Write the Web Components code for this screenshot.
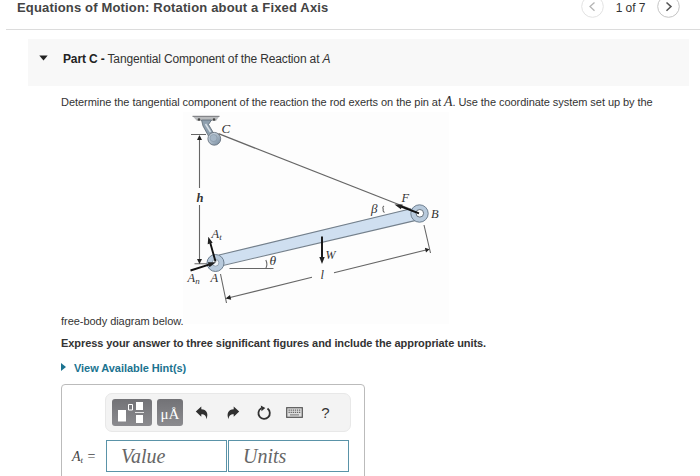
<!DOCTYPE html>
<html lang="en">
<head>
<meta charset="utf-8">
<title>Equations of Motion: Rotation about a Fixed Axis</title>
<style>
    html, body {
        margin: 0;
        height: 476px;
        overflow: hidden;
        background: #fff;
        font-family: "Liberation Sans", Arial, sans-serif;
        color: #333;
    }
</style>
</head>
<body>
<problem-page>
    <item-header slot="header" position="1 of 7">Equations of Motion: Rotation about a Fixed Axis</item-header>
    <part-heading label="Part C -">Tangential Component of the Reaction at <i>A</i></part-heading>
    <part-question>
        <rod-diagram slot="figure"></rod-diagram>
    </part-question>
    <answer-box></answer-box>
</problem-page>

<script>
class ProblemPage extends HTMLElement {
    constructor() {
        super();
        this.attachShadow({ mode: 'open' }).innerHTML = `
            <style>
                :host {
                    display: block;
                    height: 476px;
                    overflow: hidden;
                }

                main {
                    display: flex;
                    flex-direction: column;
                    padding: 9px 11px 0 28px;
                }
            </style>
            <slot name="header"></slot>
            <main><slot></slot></main>
        `;
    }
}

class ItemHeader extends HTMLElement {
    constructor() {
        super();
        this.attachShadow({ mode: 'open' }).innerHTML = `
            <style>
                :host {
                    display: flex;
                    align-items: flex-start;
                    justify-content: space-between;
                    box-sizing: border-box;
                    height: 30px;
                    margin-left: 6px;
                    padding: 0 20px 0 11px;
                    border-bottom: 1px solid #dcdcdc;
                }

                h1 {
                    margin: 0;
                    font-size: 13px;
                    line-height: 15px;
                    letter-spacing: 0.165px;
                    color: #444;
                }

                nav {
                    display: flex;
                    align-items: center;
                    margin-top: -5px;
                    font-size: 12px;
                }

                .count {
                    width: 53px;
                    text-align: center;
                    padding-top: 2px;
                    letter-spacing: -0.1px;
                }

                svg {
                    display: block;
                    width: 23px;
                    height: 23px;
                    fill: none;
                }
            </style>
            <h1><slot></slot></h1>
            <nav>
                <svg viewBox="0 0 23 23">
                    <circle cx="11.5" cy="11.5" r="10.8" stroke="#e2e2e2"/>
                    <path d="M13.5 7.5L9 11.6L13.5 15.8" stroke="#b5b5b5" stroke-width="1.3"/>
                </svg>
                <span class="count"></span>
                <svg viewBox="0 0 23 23">
                    <circle cx="11.5" cy="11.5" r="10.8" stroke="#c4c4c4"/>
                    <path d="M9.5 7.5L14 11.6L9.5 15.8" stroke="#555" stroke-width="1.5"/>
                </svg>
            </nav>
        `;
    }

    connectedCallback() {
        this.shadowRoot.querySelector('.count').textContent = this.getAttribute('position');
    }
}

class PartHeading extends HTMLElement {
    constructor() {
        super();
        this.attachShadow({ mode: 'open' }).innerHTML = `
            <style>
                :host {
                    display: flex;
                    align-items: center;
                    box-sizing: border-box;
                    height: 47px;
                    padding: 0 0 8px 11px;
                    background: #f8f8f8;
                    font-size: 12px;
                    letter-spacing: -0.145px;
                }

                svg {
                    width: 9px;
                    height: 6px;
                    margin: -2px 15px 0 0;
                    fill: #222;
                }

                b {
                    color: #222;
                }
            </style>
            <svg viewBox="0 0 9 6"><path d="M0.3 0.6H8.7L4.5 5.6Z"/></svg>
            <span><b></b> <slot></slot></span>
        `;
    }

    connectedCallback() {
        this.shadowRoot.querySelector('b').textContent = this.getAttribute('label');
    }
}

class PartQuestion extends HTMLElement {
    constructor() {
        super();
        this.attachShadow({ mode: 'open' }).innerHTML = `
            <style>
                :host {
                    display: block;
                    padding: 7px 0 0 33px;
                    font-size: 11px;
                }

                p {
                    margin: 0;
                    white-space: nowrap;
                }

                .intro {
                    height: 19px;
                    line-height: 19px;
                    letter-spacing: -0.052px;
                }

                .intro i {
                    font: italic 14px/1 "Liberation Serif", serif;
                }

                .figure {
                    display: flex;
                    align-items: flex-end;
                }

                .figure span {
                    width: 122px;
                    line-height: 13px;
                    margin-bottom: -4px;
                    white-space: nowrap;
                    letter-spacing: -0.04px;
                }

                .express {
                    margin-top: 13px;
                    line-height: 13px;
                    font-weight: bold;
                    letter-spacing: -0.078px;
                }

                .hints {
                    display: flex;
                    align-items: center;
                    gap: 8px;
                    margin-top: 12px;
                    line-height: 13px;
                    font-weight: bold;
                    letter-spacing: -0.05px;
                    color: #1b7390;
                }

                .hints svg {
                    width: 5px;
                    height: 8px;
                    margin-top: -3px;
                    fill: currentColor;
                }
            </style>
            <p class="intro">Determine the tangential component of the reaction the rod exerts on the pin at <i>A</i>. Use the coordinate system set up by the</p>
            <div class="figure"><span>free-body diagram below.</span><slot name="figure"></slot></div>
            <p class="express">Express your answer to three significant figures and include the appropriate units.</p>
            <div class="hints">
                <svg viewBox="0 0 5 8"><path d="M0 0L5 4L0 8Z"/></svg>
                <span>View Available Hint(s)</span>
            </div>
        `;
    }
}

class RodDiagram extends HTMLElement {
    constructor() {
        super();
        this.attachShadow({ mode: 'open' }).innerHTML = `
            <style>
                :host {
                    display: block;
                    width: 266px;
                    height: 212px;
                    background: #fdfdfd;
                }

                svg {
                    display: block;
                    width: 266px;
                    height: 212px;
                }

                text {
                    font: italic 12.5px "Liberation Serif", serif;
                    fill: #333;
                }

                .thin {
                    fill: none;
                    stroke: #666;
                    stroke-width: 1.1;
                }

                .force {
                    stroke: #111;
                    stroke-width: 1.9;
                }

                .tip {
                    fill: #222;
                }
            </style>
            <svg viewBox="183 112 266 212">
                <defs>
                    <linearGradient id="steel" x1="0" y1="0" x2="1" y2="1">
                        <stop offset="0" stop-color="#dfe8f0"/>
                        <stop offset="1" stop-color="#72879b"/>
                    </linearGradient>
                </defs>

                <!-- ceiling bracket and pulley at C -->
                <path d="M192.5 116H219.5L216 121H197Z" fill="#b9bbbd"/>
                <path d="M192.5 116.3H219.5" stroke="#77797c"/>
                <path d="M201.5 120H211.5L208.500 124.500L213.500 133L208.500 136L203 126Z" fill="#8e9fae" stroke="#5c6873" stroke-width="0.8"/>
                <path d="M205.5 124L210.500 132" stroke="#d6dfe7" stroke-width="1.5"/>
                <circle cx="199" cy="119.5" r="1.3" fill="#444"/>
                <circle cx="214" cy="119.5" r="1.3" fill="#444"/>
                <circle cx="214.3" cy="138.8" r="6.4" fill="url(#steel)" stroke="#66727e" stroke-width="0.9"/>
                <circle cx="213.5" cy="138" r="3.6" fill="#a5b6c6" stroke="#7b8b9a" stroke-width="0.5"/>
                <path d="M218.5 133.7L414 210.5" stroke="#666" stroke-width="1.3"/>

                <!-- height dimension -->
                <path class="thin" d="M191 134.5H206M199.5 136V188M199.5 205V263M194.5 263.7H207"/>
                <path class="tip" d="M199.5 135L202 140H197ZM199.5 264L197 259H202Z"/>

                <!-- rod -->
                <path d="M217 255.5L413.5 208L416 220.5L221 265.5Z" fill="#cfdff0"/>
                <path d="M219 255L411 208.8M223 265.5L415 220.6" fill="none" stroke="#74808c" stroke-width="1.1"/>
                <circle cx="215.5" cy="263" r="8.5" fill="#b8cadc" stroke="#6e7f90"/>
                <circle cx="215.5" cy="262.8" r="3.4" fill="#eff4f8" stroke="#8494a3" stroke-width="0.8"/>
                <circle cx="419.5" cy="213.5" r="8.7" fill="#b8cadc" stroke="#6e7f90"/>
                <circle cx="419.8" cy="213.3" r="3.8" fill="#fff" stroke="#65717d"/>

                <!-- forces -->
                <path class="force" d="M190.5 270.5L209 264.6M215.5 261.5L210.3 243M419 213.3L401 206.5M322 236.5V258"/>
                <path class="tip" d="M216 262.3L209.5 267.2L207.8 262.3ZM208.3 236.8L212.7 242.7L207.7 244.2ZM394.5 204.5L402.7 204.5L400.9 209.2ZM322 264L319.3 257H324.7Z"/>

                <!-- angle and length dimension -->
                <path class="thin" d="M229.5 268.5H273.5M265.8 260Q268 264.3 265.8 268.5M384 206Q382 207.500 383.300 209Q382.500 211.500 384.500 212.500"/>
                <path class="thin" d="M220.5 274L226.5 303M424 225L430.5 253M227 298.2L312 277.3M334 272.7L428 249.5"/>
                <path class="tip" d="M225.5 298.6L230 294.9L231.2 299.8ZM429.5 249.2L424.9 247.8L426 252.5Z"/>

                <text x="221.5" y="132.5" style="font-size: 13px">C</text>
                <text x="196.5" y="201.5" style="font-weight: bold">h</text>
                <text x="211.5" y="237.5">A<tspan dy="2" style="font-size: 9px">t</tspan></text>
                <text x="187.5" y="281.5">A<tspan dy="2.5" style="font-size: 9px">n</tspan></text>
                <text x="210.5" y="281.5">A</text>
                <text x="269.5" y="265" style="font-size: 13.5px">θ</text>
                <text x="371" y="213" style="font-size: 13px">β</text>
                <text x="401.5" y="201.5">F</text>
                <text x="431" y="217.5">B</text>
                <text x="325.5" y="258.5" style="font-size: 12px">W</text>
                <text x="320.5" y="278.5">l</text>
            </svg>
        `;
    }
}

class AnswerToolbar extends HTMLElement {
    constructor() {
        super();
        this.attachShadow({ mode: 'open' }).innerHTML = `
            <style>
                :host {
                    display: flex;
                    align-items: center;
                    box-sizing: border-box;
                    width: 246px;
                    height: 39px;
                    padding: 0 6px;
                    border: 1px solid #e8e8e8;
                    border-radius: 7px;
                    background: #f3f3f3;
                }

                button {
                    display: flex;
                    align-items: center;
                    justify-content: center;
                    width: 31px;
                    height: 27px;
                    padding: 0;
                    border: 0;
                    background: none;
                    font: 15px "Liberation Sans", sans-serif;
                    color: #333;
                }

                .dark {
                    box-sizing: border-box;
                    width: 26px;
                    margin-right: 3px;
                    border-radius: 3px;
                    background: linear-gradient(#727276, #8b8b8f);
                    font: 15px/25px "Liberation Serif", serif;
                    color: #fff;
                }

                .units {
                    padding-top: 3px;
                }

                .templates {
                    width: 40px;
                    margin-right: 5px;
                }

                svg {
                    display: block;
                    fill: none;
                }
            </style>
            <button class="dark templates" aria-label="Templates">
                <svg width="40" height="27" viewBox="0 0 40 27">
                    <path d="M6 11H14V22.5H6ZM24 3H31V11H24ZM24 16H31V24H24Z" fill="#fff"/>
                    <path d="M16.5 5.5H20.5V11H16.5Z" stroke="#fff"/>
                    <path d="M23 13.5H32" stroke="#e4e4e4"/>
                </svg>
            </button>
            <button class="dark units">μÅ</button>
            <button aria-label="Undo">
                <svg width="14" height="14" viewBox="0 0 14 14"><path d="M0.800 5.500L6.300 0.500V3.200C11.500 3.300 14 7.500 11.300 13.300C11.300 9.600 9.800 8.300 6.300 8.200V10.700Z" fill="#303030"/></svg>
            </button>
            <button aria-label="Redo">
                <svg width="14" height="14" viewBox="0 0 14 14"><path d="M13.200 5.500L7.700 0.500V3.200C2.500 3.300 0 7.500 2.700 13.300C2.700 9.600 4.200 8.300 7.700 8.200V10.700Z" fill="#303030"/></svg>
            </button>
            <button aria-label="Reset">
                <svg width="16" height="16" viewBox="0 0 16 16">
                    <path d="M11.500 3.600A5.700 5.700 0 1 1 5.200 3.300" stroke="#303030" stroke-width="1.8"/>
                    <path d="M4.800 0.500L9.300 3L5.500 6.200Z" fill="#303030"/>
                </svg>
            </button>
            <button aria-label="Keyboard shortcuts">
                <svg width="17" height="11" viewBox="0 0 17 11">
                    <rect x="0.7" y="0.7" width="15.6" height="9.6" fill="#ddd" stroke="#555" stroke-width="1.2"/>
                    <path d="M2.5 3.2H14.5M2.5 5.4H14.5" stroke="#666" stroke-width="1.2" stroke-dasharray="1.3 0.8"/>
                    <path d="M4 7.9H13" stroke="#777"/>
                </svg>
            </button>
            <button aria-label="Help">?</button>
        `;
    }
}

class AnswerBox extends HTMLElement {
    constructor() {
        super();
        this.attachShadow({ mode: 'open' }).innerHTML = `
            <style>
                :host {
                    display: block;
                    box-sizing: border-box;
                    width: 304px;
                    height: 120px;
                    margin: 9px 0 0 33px;
                    padding: 8px 0 0 9px;
                    border: 1px solid #bbb;
                    border-radius: 4px;
                }

                answer-toolbar {
                    margin-left: 34px;
                }

                .row {
                    display: flex;
                    align-items: center;
                    margin-top: 8px;
                    font: 14px "Liberation Serif", serif;
                }

                .name {
                    width: 34px;
                    padding: 2px 0 0 1px;
                    white-space: nowrap;
                    color: #444;
                }

                sub {
                    margin-right: 1px;
                    font-size: 9px;
                    font-style: italic;
                    vertical-align: -2px;
                    line-height: 0;
                }

                .field {
                    box-sizing: border-box;
                    width: 121px;
                    height: 32px;
                    margin-right: 1px;
                    padding-left: 14px;
                    border: 1px solid #5a93a8;
                    background: #fff;
                    font: italic 20px/30px "Liberation Serif", serif;
                    color: #666;
                }
            </style>
            <answer-toolbar></answer-toolbar>
            <div class="row">
                <span class="name"><i>A</i><sub>t</sub> =</span>
                <div class="field">Value</div>
                <div class="field">Units</div>
            </div>
        `;
    }
}

customElements.define('problem-page', ProblemPage);
customElements.define('item-header', ItemHeader);
customElements.define('part-heading', PartHeading);
customElements.define('part-question', PartQuestion);
customElements.define('rod-diagram', RodDiagram);
customElements.define('answer-toolbar', AnswerToolbar);
customElements.define('answer-box', AnswerBox);
</script>
</body>
</html>
